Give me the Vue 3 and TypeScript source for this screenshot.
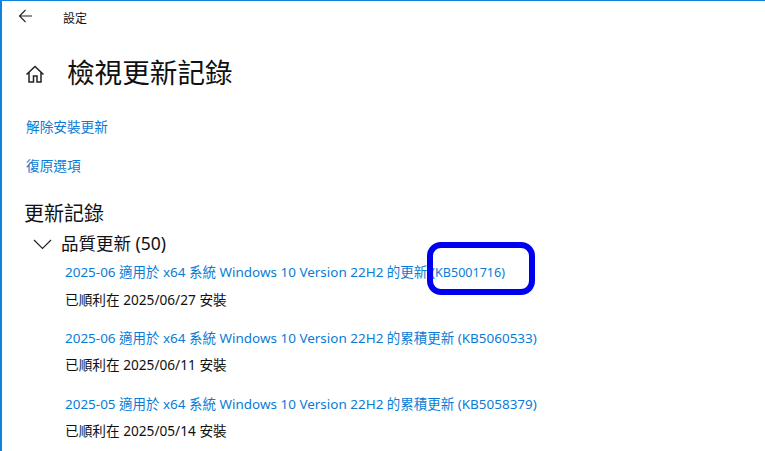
<script setup lang="ts">
interface Update { title: string; kb: string; compact: boolean; status: string }
const updates: Update[] = [
  { title: '2025-06 適用於 x64 系統 Windows 10 Version 22H2 的更新', kb: '(KB5001716)', compact: true, status: '已順利在 2025/06/27 安裝' },
  { title: '2025-06 適用於 x64 系統 Windows 10 Version 22H2 的累積更新', kb: '(KB5060533)', compact: false, status: '已順利在 2025/06/11 安裝' },
  { title: '2025-05 適用於 x64 系統 Windows 10 Version 22H2 的累積更新', kb: '(KB5058379)', compact: false, status: '已順利在 2025/05/14 安裝' },
]
</script>

<template>
  <div class="window">
    <header class="titlebar">
      <svg class="back" width="16" height="14" viewBox="0 0 16 14" fill="none" stroke="#222" stroke-width="1.1">
        <path d="M1.500 7H14M7.500 1L1.500 7l6 6" />
      </svg>
      <span class="app-name">設定</span>
    </header>

    <div class="heading">
      <svg class="home" width="20" height="20" viewBox="0 0 20 20" fill="none" stroke="#222" stroke-width="1.5">
        <path d="M1.500 10.500L10 2.500l8.500 8M4 8.500V18h4.500v-6h3.500v6H16V8.500" />
      </svg>
      <h1>檢視更新記錄</h1>
    </div>

    <nav class="links">
      <a>解除安裝更新</a>
      <a>復原選項</a>
    </nav>

    <h2>更新記錄</h2>
    <div class="group">
      <svg class="chevron" width="19" height="11" viewBox="0 0 19 11" fill="none" stroke="#222" stroke-width="1.2">
        <path d="M1 1l8.500 8.500L18 1" />
      </svg>
      <span>品質更新 (50)</span>
    </div>

    <ul class="updates">
      <li v-for="u in updates" :key="u.kb">
        <a>{{ u.title }} <span :class="{ compact: u.compact }">{{ u.kb }}</span></a>
        <p>{{ u.status }}</p>
      </li>
    </ul>

    <div class="marker"></div>
  </div>
</template>

<style>
html, body { margin: 0; background: #fff; }
</style>

<style scoped>
.window {
  position: relative;
  width: 765px;
  height: 451px;
  box-sizing: border-box;
  overflow: hidden;
  background: #fff;
  border-top: 1px solid #0a84e0;
  border-left: 2px solid #0a84e0;
  font-family: "Noto Sans", "Noto Sans CJK TC", sans-serif;
  color: #111;
}
.titlebar {
  display: flex;
  align-items: center;
  height: 32px;
  padding-left: 16px;
  font-size: 12px;
}
.back { margin-right: 29px; margin-top: -2px; }
.app-name { margin-top: 1px; }
.heading {
  display: flex;
  align-items: center;
  height: 40px;
  margin-top: 19px;
  padding-left: 23px;
}
.home { margin-right: 22px; margin-top: 3px; }
h1 {
  margin: 0;
  font-size: 27.6px;
  font-weight: 400;
  line-height: 40px;
}
.links {
  display: flex;
  flex-direction: column;
  align-items: flex-start;
  gap: 20px;
  margin-top: 25px;
  padding-left: 24px;
}
.links a {
  font-size: 13.67px;
  line-height: 19px;
  color: #0a7cd6;
}
h2 {
  margin: 26px 0 0 22px;
  font-size: 20px;
  font-weight: 400;
  line-height: 26px;
}
.group {
  display: flex;
  align-items: center;
  height: 24px;
  margin-top: 3px;
  padding-left: 31px;
  font-size: 17.5px;
}
.chevron { margin-right: 9px; margin-top: 4px; }
.updates {
  list-style: none;
  margin: 8px 0 0;
  padding: 0 0 0 63px;
}
.updates li { height: 66px; }
.updates a {
  display: block;
  font-size: 13.47px;
  line-height: 20px;
  white-space: nowrap;
  color: #0a7cd6;
}
.updates .compact {
  margin-left: 0.5px;
  font-size: 12.55px;
}
.updates p {
  margin: 7px 0 0;
  font-size: 13.67px;
  line-height: 20px;
}
.marker {
  position: absolute;
  left: 425px;
  top: 241px;
  width: 108px;
  height: 53px;
  box-sizing: border-box;
  border: 6px solid #0000f0;
  border-radius: 14px;
}
</style>
